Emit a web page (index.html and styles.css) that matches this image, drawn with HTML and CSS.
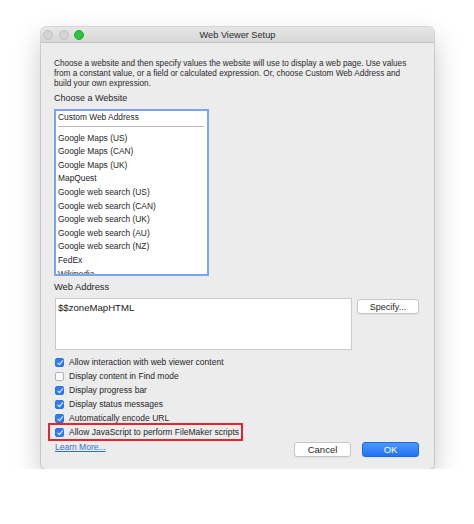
FILE: index.html
```html
<!DOCTYPE html>
<html>
<head>
  <meta charset="UTF-8">
  <title>Web Viewer Setup</title>
  <link rel="stylesheet" href="styles.css">
</head>
<body>

  <div class="window">
    <div class="titlebar">
      <div class="lights">
        <span class="light"></span>
        <span class="light"></span>
        <span class="light green"></span>
      </div>
      <div class="title">Web Viewer Setup</div>
    </div>

    <div class="content">
      <p class="desc">Choose a website and then specify values the website will use to display a web page. Use values from a constant value, or a field or calculated expression. Or, choose Custom Web Address and build your own expression.</p>

      <div class="label">Choose a Website</div>
      <div class="sitelist">
        <div class="item">Custom Web Address</div>
        <div class="sep"></div>
        <div class="item">Google Maps (US)</div>
        <div class="item">Google Maps (CAN)</div>
        <div class="item">Google Maps (UK)</div>
        <div class="item">MapQuest</div>
        <div class="item">Google web search (US)</div>
        <div class="item">Google web search (CAN)</div>
        <div class="item">Google web search (UK)</div>
        <div class="item">Google web search (AU)</div>
        <div class="item">Google web search (NZ)</div>
        <div class="item">FedEx</div>
        <div class="item">Wikipedia</div>
      </div>

      <div class="label addr-label">Web Address</div>
      <div class="addr-row">
        <div class="addr">$$zoneMapHTML</div>
        <button class="btn">Specify...</button>
      </div>

      <div class="options">
        <label class="opt"><span class="box on"></span>Allow interaction with web viewer content</label>
        <label class="opt"><span class="box"></span>Display content in Find mode</label>
        <label class="opt"><span class="box on"></span>Display progress bar</label>
        <label class="opt"><span class="box on"></span>Display status messages</label>
        <label class="opt"><span class="box on"></span>Automatically encode URL</label>
        <label class="opt marked"><span class="box on"></span>Allow JavaScript to perform FileMaker scripts</label>
      </div>

      <div class="footer">
        <a class="learn" href="#">Learn More...</a>
        <div class="actions">
          <button class="btn wide">Cancel</button>
          <button class="btn wide primary">OK</button>
        </div>
      </div>
    </div>
  </div>

</body>
</html>
```

FILE: styles.css
```css
* {
  box-sizing: border-box;
}
body {
  margin: 0;
  padding: 27px 0 0 41px;
  background: #ffffff;
  font-family: "Liberation Sans", Arial, sans-serif;
  color: #222;
}
.window {
  width: 393px;
  height: 442px;
  background: #ececec;
  border-radius: 5px;
  overflow: hidden;
  box-shadow: 0 0 0 1px rgba(0,0,0,0.13), 0 12px 28px rgba(0,0,0,0.22);
}
.titlebar {
  height: 16px;
  background: linear-gradient(#e6e6e6, #d8d8d8);
  border-bottom: 1px solid #c4c4c4;
  display: flex;
  align-items: center;
  position: relative;
}
.lights {
  display: flex;
  gap: 5.5px;
  padding-left: 2px;
}
.light {
  width: 10px;
  height: 10px;
  border-radius: 50%;
  background: #d3d3d3;
  border: 1px solid #c2c2c2;
}
.light.green {
  background: #2bc441;
  border-color: #22a834;
}
.title {
  position: absolute;
  left: 0;
  right: 0;
  text-align: center;
  font-size: 9.2px;
  color: #2b2b2b;
}
.content {
  padding: 16px 15px 0 13px;
}
.desc {
  margin: 0;
  font-size: 8.2px;
  line-height: 10px;
  color: #2b2b2b;
}
.label {
  font-size: 9px;
  line-height: 12px;
  margin-top: 3px;
  color: #1f1f1f;
}
.sitelist {
  margin-top: 5px;
  width: 155px;
  height: 167px;
  background: #fff;
  border: 2px solid #78a6ec;
  overflow: hidden;
  font-size: 8.4px;
  padding-left: 2px;
}
.item {
  line-height: 13.6px;
  height: 13.6px;
  color: #262626;
}
.sep {
  height: 5.6px;
  border-top: 1px solid #b8b8b8;
  margin: 1.5px 3px 0 0;
}
.addr-label {
  margin-top: 5px;
  font-size: 9.3px;
}
.addr-row {
  display: flex;
  gap: 5px;
  margin-top: 5px;
  align-items: flex-start;
}
.addr {
  width: 297px;
  height: 52px;
  margin-left: 1px;
  background: #fff;
  border: 1px solid #c9c9c9;
  font-size: 9.6px;
  padding: 3px 0 0 2px;
  color: #1a1a1a;
}
.btn {
  font-family: inherit;
  font-size: 9px;
  color: #262626;
  background: #fff;
  border: 1px solid #c6c6c6;
  border-radius: 3px;
  height: 15px;
  width: 62px;
  padding: 0;
  margin-top: 1px;
  box-shadow: 0 1px 1px rgba(0,0,0,0.06);
}
.options {
  margin-top: 5px;
  display: flex;
  flex-direction: column;
  align-items: flex-start;
}
.opt {
  display: flex;
  align-items: center;
  gap: 5px;
  height: 14px;
  font-size: 8.5px;
  color: #262626;
  padding-left: 1px;
}
.box {
  width: 9px;
  height: 9px;
  border-radius: 2px;
  background: #fff;
  border: 1px solid #b0b0b0;
  position: relative;
}
.box.on {
  background: #2f7cf6;
  border-color: #2a72e6;
}
.box.on::after {
  content: "";
  position: absolute;
  left: 2.5px;
  top: 0.5px;
  width: 2px;
  height: 4.5px;
  border: solid #fff;
  border-width: 0 1.5px 1.5px 0;
  transform: rotate(40deg);
}
.opt.marked {
  margin-left: -4px;
  padding-left: 5px;
  padding-right: 2px;
  outline: 2.5px solid #e4252b;
  outline-offset: 0.5px;
}
.footer {
  margin-top: 2.7px;
  display: flex;
  justify-content: space-between;
  align-items: flex-start;
}
.learn {
  font-size: 8.5px;
  color: #2c6fd5;
  margin-top: 0;
  margin-left: 1px;
}
.actions {
  display: flex;
  gap: 11px;
}
.btn.wide {
  width: 57px;
  height: 15px;
  margin-top: 0;
  font-size: 9.5px;
}
.btn.primary {
  background: linear-gradient(#4c98f9, #1f74f2);
  border-color: #1d6ae0;
  color: #fff;
}
```
